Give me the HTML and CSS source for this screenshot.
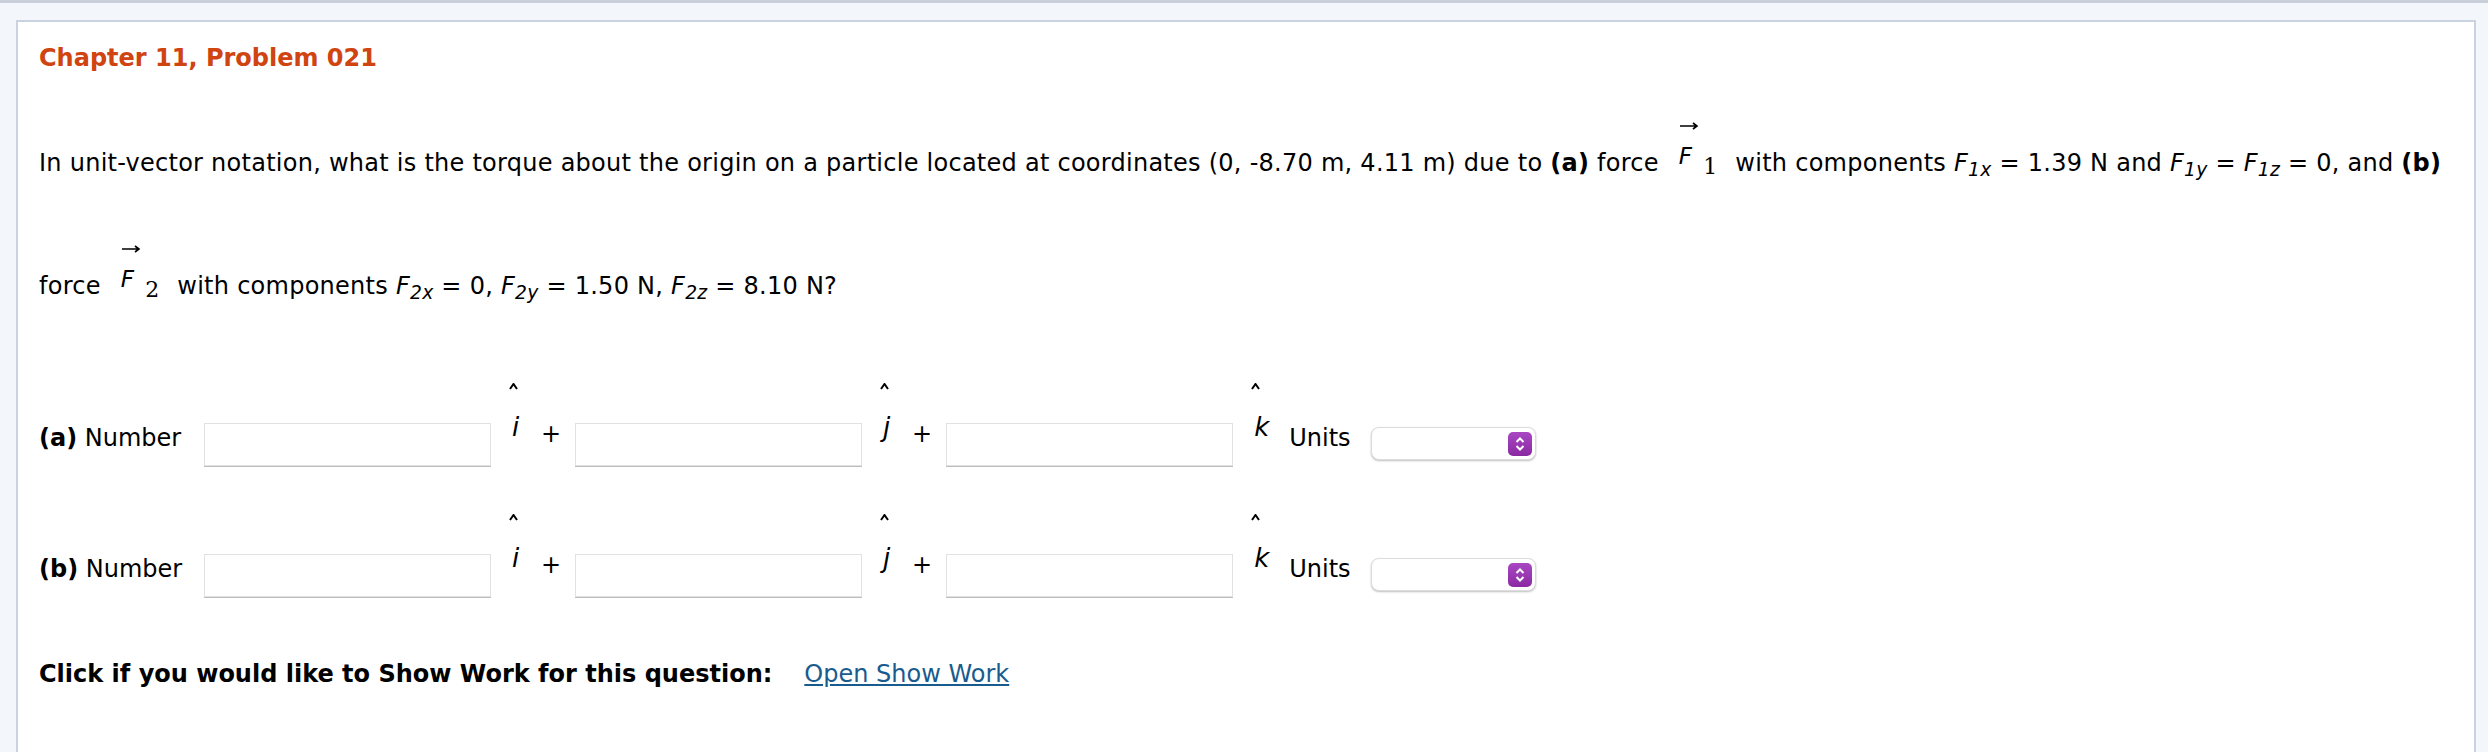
FILE: index.html
```html
<!DOCTYPE html>
<html lang="en">
<head>
    <meta charset="UTF-8">
    <title>Chapter 11, Problem 021</title>
    <link rel="stylesheet" href="styles.css">
</head>
<body>

<div class="panel">
    <!-- Question -->
    <h1 class="title">Chapter 11, Problem 021</h1>

    <p class="question">In unit-vector notation, what is the torque about the origin on a particle located at coordinates (0, -8.70 m, 4.11 m) due to <b>(a)</b> force <span class="vec"><svg class="vec-arrow" width="20" height="8" viewBox="0 0 20 8"><path d="M1 4H18M14 1L18 4L14 7" fill="none" stroke="#000" stroke-width="1.6"/></svg><span class="vec-base"><i class="vec-f">F</i><span class="vec-sub">1</span></span></span> with components <i>F<sub>1x</sub></i> = 1.39 N and <i>F<sub>1y</sub></i> = <i>F<sub>1z</sub></i> = 0, and <b>(b)</b><br>force <span class="vec"><svg class="vec-arrow" width="20" height="8" viewBox="0 0 20 8"><path d="M1 4H18M14 1L18 4L14 7" fill="none" stroke="#000" stroke-width="1.6"/></svg><span class="vec-base"><i class="vec-f">F</i><span class="vec-sub">2</span></span></span> with components <i>F<sub>2x</sub></i> = 0, <i>F<sub>2y</sub></i> = 1.50 N, <i>F<sub>2z</sub></i> = 8.10 N?</p>

    <!-- Answers -->
    <div class="answers">
        <div class="answer-row">
            <label class="answer-label"><b>(a)</b> Number</label>
            <input class="answer-input" type="text">
            <span class="unit"><svg class="hat" width="9" height="7" viewBox="0 0 9 7"><path d="M1 6L4.5 1L8 6" fill="none" stroke="#000" stroke-width="2"/></svg><i class="unit-letter">i</i></span>
            <span class="plus">+</span>
            <input class="answer-input" type="text">
            <span class="unit"><svg class="hat" width="9" height="7" viewBox="0 0 9 7"><path d="M1 6L4.5 1L8 6" fill="none" stroke="#000" stroke-width="2"/></svg><i class="unit-letter">j</i></span>
            <span class="plus">+</span>
            <input class="answer-input" type="text">
            <span class="unit"><svg class="hat" width="9" height="7" viewBox="0 0 9 7"><path d="M1 6L4.5 1L8 6" fill="none" stroke="#000" stroke-width="2"/></svg><i class="unit-letter">k</i></span>
            <span class="units-label">Units</span>
            <div class="units-select">
                <span class="select-btn"><svg width="12" height="16" viewBox="0 0 12 16"><path d="M2.5 6L6 2.5L9.5 6M2.5 10L6 13.5L9.5 10" fill="none" stroke="#fff" stroke-width="2"/></svg></span>
            </div>
        </div>

        <div class="answer-row">
            <label class="answer-label"><b>(b)</b> Number</label>
            <input class="answer-input" type="text">
            <span class="unit"><svg class="hat" width="9" height="7" viewBox="0 0 9 7"><path d="M1 6L4.5 1L8 6" fill="none" stroke="#000" stroke-width="2"/></svg><i class="unit-letter">i</i></span>
            <span class="plus">+</span>
            <input class="answer-input" type="text">
            <span class="unit"><svg class="hat" width="9" height="7" viewBox="0 0 9 7"><path d="M1 6L4.5 1L8 6" fill="none" stroke="#000" stroke-width="2"/></svg><i class="unit-letter">j</i></span>
            <span class="plus">+</span>
            <input class="answer-input" type="text">
            <span class="unit"><svg class="hat" width="9" height="7" viewBox="0 0 9 7"><path d="M1 6L4.5 1L8 6" fill="none" stroke="#000" stroke-width="2"/></svg><i class="unit-letter">k</i></span>
            <span class="units-label">Units</span>
            <div class="units-select">
                <span class="select-btn"><svg width="12" height="16" viewBox="0 0 12 16"><path d="M2.5 6L6 2.5L9.5 6M2.5 10L6 13.5L9.5 10" fill="none" stroke="#fff" stroke-width="2"/></svg></span>
            </div>
        </div>
    </div>

    <!-- Show work -->
    <p class="show-work"><b>Click if you would like to Show Work for this question:</b><a href="#" class="show-work-link">Open Show Work</a></p>
</div>

</body>
</html>
```

FILE: styles.css
```css
body {
    margin: 0;
    background: #f3f6fa;
    border-top: 3px solid #c9d0da;
    font-family: "DejaVu Sans", sans-serif;
    font-size: 24px;
    color: #000;
}

.panel {
    margin: 17px 12px 0 16px;
    border: 2px solid #c9d3df;
    background: #fff;
    padding: 0 0 0 21px;
    height: 800px;
}

.title {
    margin: 22px 0 0;
    font-size: 24px;
    line-height: 28px;
    font-weight: bold;
    color: #cf4410;
}

.question {
    margin: 30px 0 0;
    line-height: 123px;
    letter-spacing: 0.26px;
    white-space: nowrap;
}

.question sub {
    font-size: 78%;
    line-height: 0;
    vertical-align: -5px;
}

/* vector with arrow over it */
.vec {
    display: inline-block;
    line-height: 24px;
    padding: 0 10px 0 12px;
}

.vec-arrow {
    display: block;
    margin-bottom: 14px;
}

.vec-f {
    font-size: 23px;
    vertical-align: 7px;
}

.vec-sub {
    font-family: "DejaVu Serif", serif;
    font-size: 22px;
    margin-left: 11px;
    vertical-align: -3px;
}

.answers {
    margin-top: 35px;
    display: flex;
    flex-direction: column;
    gap: 40px;
}

.answer-row {
    display: flex;
    align-items: flex-start;
    height: 91px;
}

.answer-label {
    width: 165px;
    margin-top: 41px;
    line-height: 28px;
}

.answer-input {
    width: 287px;
    height: 43px;
    box-sizing: border-box;
    margin: 40px 0 0;
    border: 1px solid #e1e1e1;
    box-shadow: 0 1px 0 #bdbdbd;
    font-size: 22px;
}

.unit {
    display: flex;
    flex-direction: column;
    width: 22px;
    margin-left: 18px;
}

.hat {
    display: block;
}

.unit-letter {
    margin-top: 22px;
    font-size: 26px;
    line-height: 30px;
    padding-left: 3px;
}

.plus {
    margin: 37px 14px 0 10px;
    line-height: 28px;
}

.units-label {
    margin: 41px 0 0 16px;
    line-height: 28px;
}

.units-select {
    width: 165px;
    height: 33px;
    box-sizing: border-box;
    margin: 44px 0 0 20px;
    border: 1px solid #dcdcdc;
    border-radius: 8px;
    background: #fff;
    box-shadow: 0 1px 2px rgba(0, 0, 0, 0.25);
    display: flex;
    justify-content: flex-end;
    align-items: center;
    padding-right: 3px;
}

.select-btn {
    width: 24px;
    height: 24px;
    border-radius: 5px;
    background: linear-gradient(#a947c3, #8a2aa2);
    display: flex;
    justify-content: center;
    align-items: center;
}

.show-work {
    margin: 55px 0 0;
    line-height: 28px;
}

.show-work-link {
    margin-left: 32px;
    color: #1a5b8e;
}
```
